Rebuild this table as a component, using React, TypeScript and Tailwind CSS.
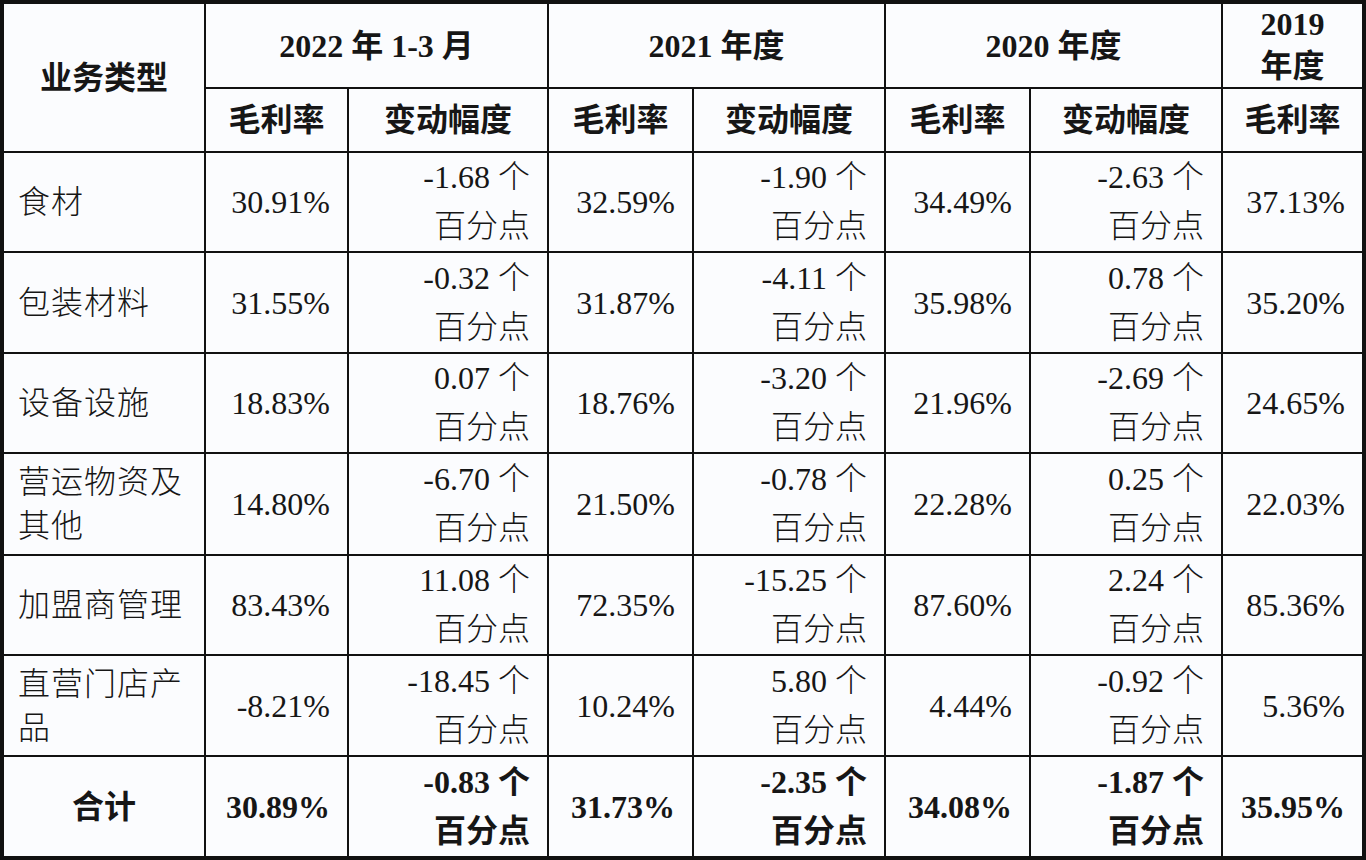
const rows = [
  { name: '食材', v: ['30.91%', '-1.68', '32.59%', '-1.90', '34.49%', '-2.63', '37.13%'] },
  { name: '包装材料', v: ['31.55%', '-0.32', '31.87%', '-4.11', '35.98%', '0.78', '35.20%'] },
  { name: '设备设施', v: ['18.83%', '0.07', '18.76%', '-3.20', '21.96%', '-2.69', '24.65%'] },
  { name: '营运物资及其他', v: ['14.80%', '-6.70', '21.50%', '-0.78', '22.28%', '0.25', '22.03%'] },
  { name: '加盟商管理', v: ['83.43%', '11.08', '72.35%', '-15.25', '87.60%', '2.24', '85.36%'] },
  { name: '直营门店产品', v: ['-8.21%', '-18.45', '10.24%', '5.80', '4.44%', '-0.92', '5.36%'] },
];

const total = ['30.89%', '-0.83', '31.73%', '-2.35', '34.08%', '-1.87', '35.95%'];

const font = "font-['Liberation_Serif','Noto_Sans_CJK_SC',serif]";

export default function App() {
  return (
    <div className={`w-[1366px] h-[860px] bg-[#111] p-[4px] ${font} text-[32px] text-[#161616]`}>
      <div className="grid h-full gap-[2px] grid-cols-[200px_141px_198px_143px_190px_143px_190px_139px] grid-rows-[83px_62px_98px_99px_98px_100px_98px_99px_99px]">
        {/* header */}
        <div className="row-span-2 bg-[#fbfcfe] flex items-center justify-center font-bold">业务类型</div>
        <div className="col-span-2 bg-[#fbfcfe] flex items-center justify-center font-bold">2022 年 1-3 月</div>
        <div className="col-span-2 bg-[#fbfcfe] flex items-center justify-center font-bold">2021 年度</div>
        <div className="col-span-2 bg-[#fbfcfe] flex items-center justify-center font-bold">2020 年度</div>
        <div className="bg-[#fbfcfe] flex flex-col items-center justify-center font-bold leading-[42px] pb-[2px]">
          <span>2019</span>
          <span>年度</span>
        </div>
        {['毛利率', '变动幅度', '毛利率', '变动幅度', '毛利率', '变动幅度', '毛利率'].map((h, i) => (
          <div key={i} className="bg-[#fbfcfe] flex items-center justify-center font-bold">
            {h}
          </div>
        ))}

        {/* body */}
        {rows.map((r) => (
          <>
            <div key={r.name} className="bg-[#fbfcfe] flex items-center pl-[14px] pr-[18px] leading-[44px] font-light tracking-[1px]">
              {r.name}
            </div>
            {r.v.map((v, i) =>
              i % 2 === 1 ? (
                <div key={r.name + i} className="bg-[#fbfcfe] flex flex-col items-end justify-center pr-[17px] leading-[49px]">
                  <span>
                    {v} <span className="font-light">个</span>
                  </span>
                  <span className="font-light">百分点</span>
                </div>
              ) : (
                <div key={r.name + i} className="bg-[#fbfcfe] flex items-center justify-end pr-[17px]">
                  {v}
                </div>
              )
            )}
          </>
        ))}

        <div className="bg-[#fbfcfe] flex items-center justify-center font-bold">合计</div>
        {total.map((v, i) =>
          i % 2 === 1 ? (
            <div key={'t' + i} className="bg-[#fbfcfe] flex flex-col items-end justify-center pr-[17px] leading-[49px] font-bold">
              <span>{v} 个</span>
              <span>百分点</span>
            </div>
          ) : (
            <div key={'t' + i} className="bg-[#fbfcfe] flex items-center justify-end pr-[17px] font-bold">
              {v}
            </div>
          )
        )}
      </div>
    </div>
  );
}
